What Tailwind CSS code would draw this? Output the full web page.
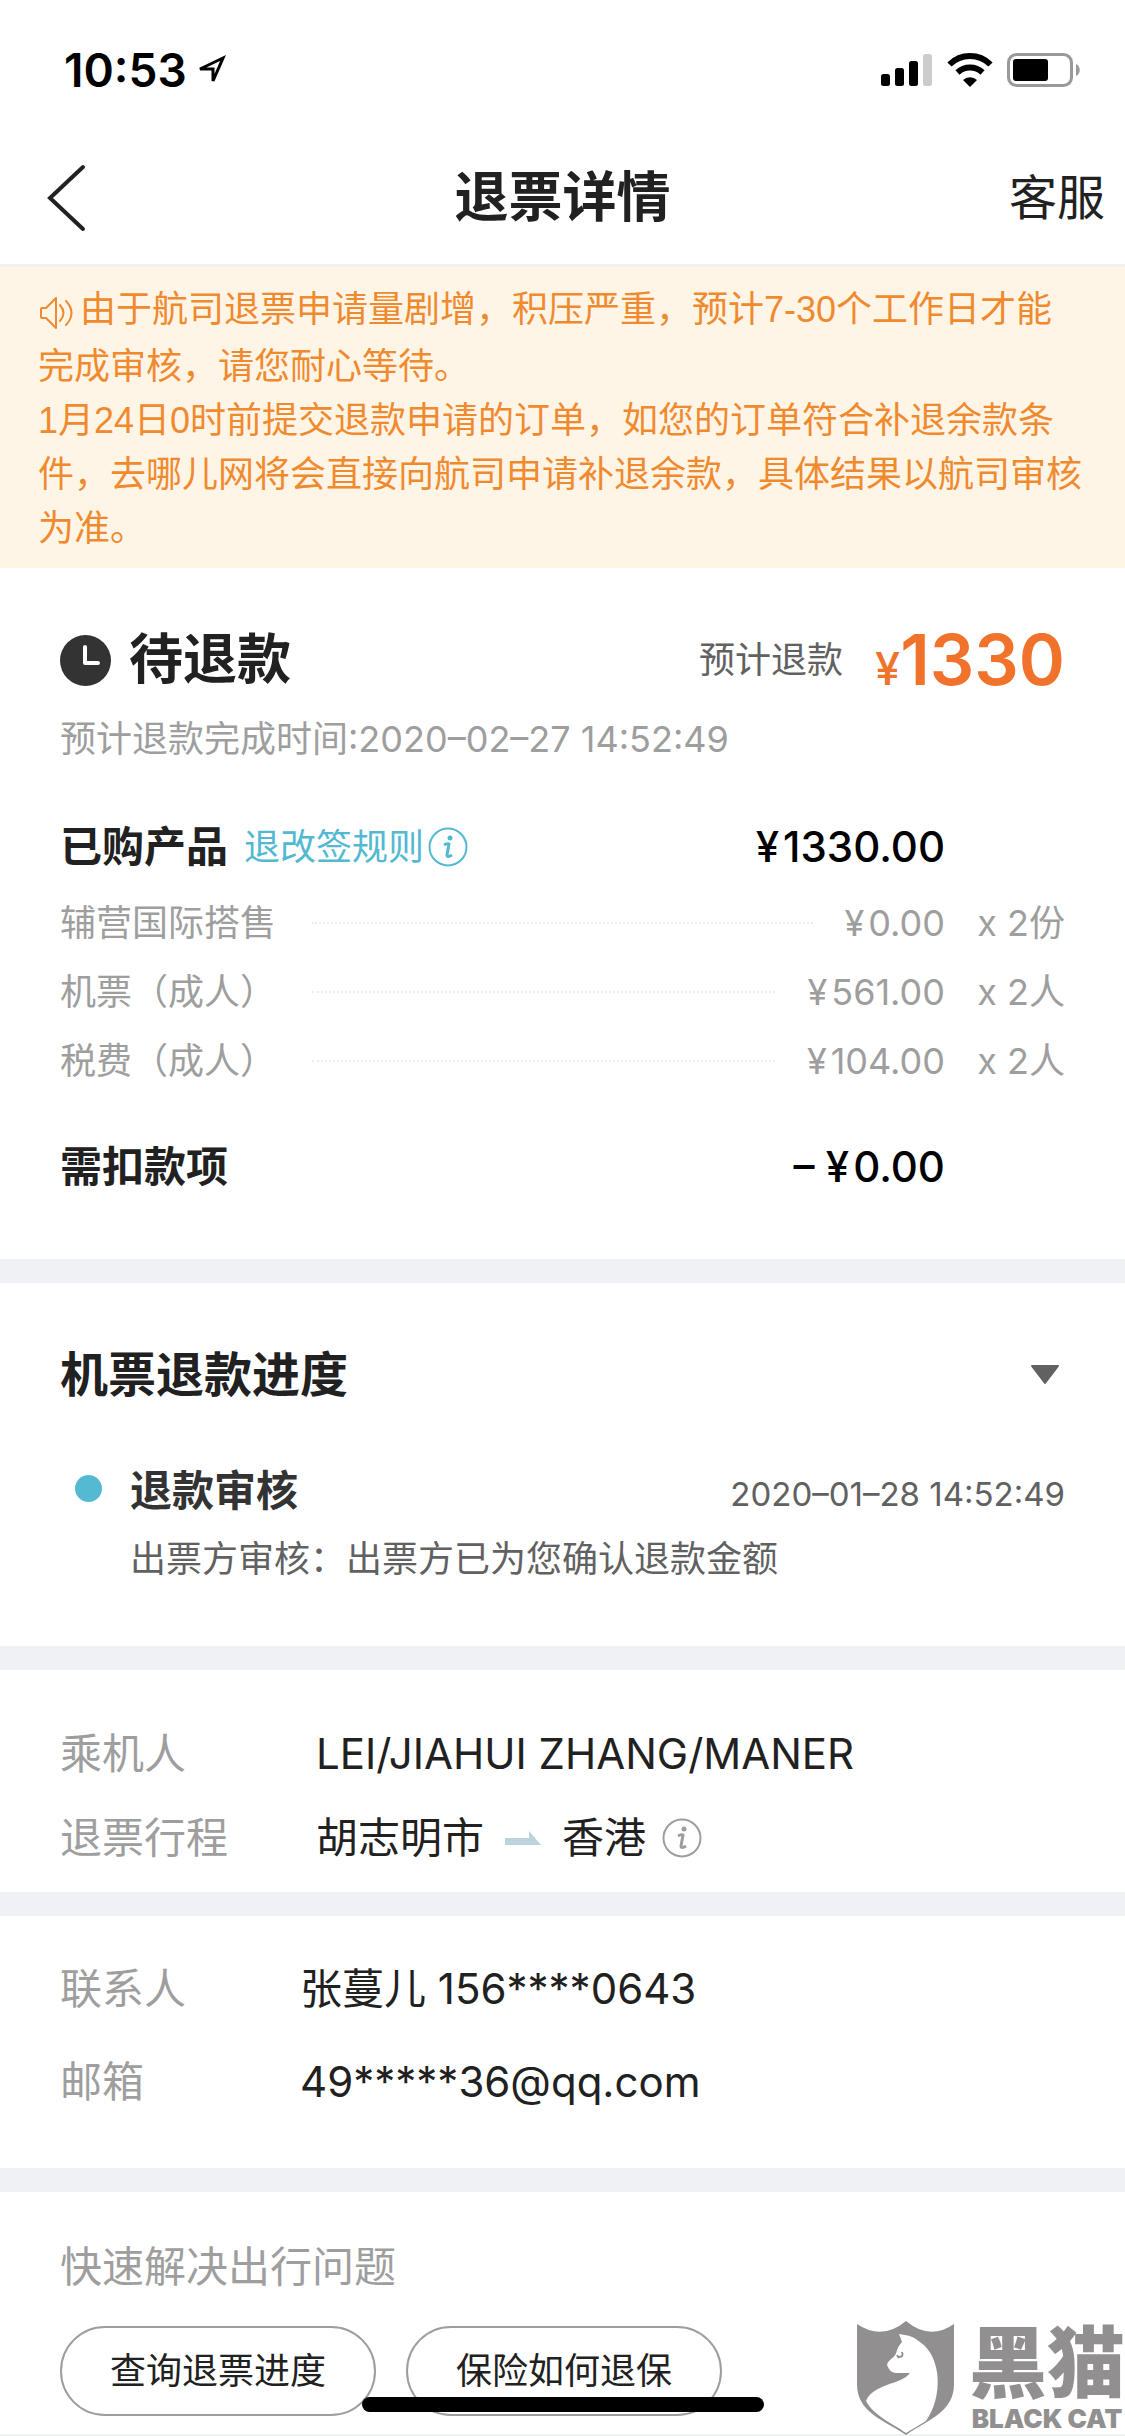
<!DOCTYPE html>
<html lang="zh-CN">
<head>
  <meta charset="UTF-8">
  <meta name="viewport" content="width=device-width, initial-scale=1.0">
  <title>退票详情</title>
  <script src="https://cdn.jsdelivr.net/npm/@tailwindcss/browser@4"></script>
</head>
<body class="relative min-h-screen overflow-x-hidden bg-[#eff1f4] font-['Inter','Noto_Sans_CJK_SC',sans-serif] text-[#212121]">

  <!-- status bar -->
  <div class="flex h-[132px] items-center justify-between bg-white pt-2 pr-11 pl-16 text-black">
    <div class="flex items-center gap-2">
      <span class="text-[46px] leading-none font-semibold">10:53</span>
      <svg class="h-8 w-8" viewBox="0 0 32 32"><path d="M28 4 5 15h13v12z" fill="none" stroke="#000" stroke-width="3"/></svg>
    </div>
    <div class="flex items-center gap-[14px]">
      <svg class="h-[34px] w-[52px]" viewBox="0 0 52 34">
        <rect x="0" y="21" width="9" height="12" rx="2.5"/><rect x="14" y="15" width="9" height="18" rx="2.5"/><rect x="28" y="8" width="9" height="25" rx="2.5"/><rect x="42" y="1" width="9" height="32" rx="2.5" fill="#ccc"/>
      </svg>
      <svg class="h-[34px] w-[46px]" viewBox="0 0 46 34">
        <path d="M2.500 11.500a29 29 0 0 1 41 0M10.500 19.500a18 18 0 0 1 25 0" fill="none" stroke="#000" stroke-width="6"/><path d="M16 27a10 10 0 0 1 14 0l-7 7z"/>
      </svg>
      <svg class="h-[34px] w-[74px]" viewBox="0 0 74 34">
        <rect x="1.500" y="1.500" width="63" height="31" rx="8" fill="none" stroke="#999" stroke-width="3"/><rect x="6" y="6" width="35" height="22" rx="3"/><path d="M69 11c5 2 5 10 0 12z" fill="#999"/>
      </svg>
    </div>
  </div>

  <!-- title bar -->
  <header class="grid h-[135px] grid-cols-3 items-center border-b-3 border-[#f0f1f2] bg-white px-5">
    <button class="ml-[26px] justify-self-start" aria-label="返回">
      <svg class="h-[68px] w-10" viewBox="0 0 40 68"><path d="M37 3 4 34l33 31" fill="none" stroke="#212121" stroke-width="4" stroke-linecap="round"/></svg>
    </button>
    <h1 class="text-center text-[54px] leading-none font-bold">退票详情</h1>
    <button class="justify-self-end text-[48px] leading-none">客服</button>
  </header>

  <!-- notice -->
  <div class="bg-[#fff5e7] pt-4 pr-10 pb-3 pl-[38px] font-['Liberation_Sans','Noto_Sans_CJK_SC',sans-serif] text-[36px] leading-[54px] text-[#f08a2f]">
    <p><svg class="inline-block h-[54px] w-[42px] align-[-18px]" viewBox="0 0 42 54"><path d="M3 23q0-1 1-1h4l10-10v30L8 32H4q-1 0-1-1zM22 19q7 8 0 16M28 15q11 12 0 24" fill="none" stroke="#f08a2f" stroke-width="2" stroke-linejoin="round" stroke-linecap="round"/></svg>由于航司退票申请量剧增，积压严重，预计7-30个工作日才能完成审核，请您耐心等待。</p>
    <p>1月24日0时前提交退款申请的订单，如您的订单符合补退余款条件，去哪儿网将会直接向航司申请补退余款，具体结果以航司审核为准。</p>
  </div>

  <main class="flex flex-col gap-6">
    <!-- refund amount -->
    <section class="bg-white px-[60px] py-14">
      <div class="flex h-[72px] items-center">
        <svg class="h-[51px] w-[51px]" viewBox="0 0 51 51"><circle cx="25.500" cy="25.500" r="25.500" fill="#333"/><path d="M25 12v16h13" fill="none" stroke="#fff" stroke-width="4" stroke-linecap="round" stroke-linejoin="round"/></svg>
        <h2 class="ml-[18px] text-[54px] leading-none font-bold">待退款</h2>
        <span class="mr-8 ml-auto text-[36px] leading-none text-[#616161]">预计退款</span>
        <span class="text-[70px] leading-none font-semibold text-[#f0722b]"><small class="text-[45px] font-medium">¥</small>1330</span>
      </div>
      <p class="mt-4 text-[36px] leading-[54px] text-[#9e9e9e]">预计退款完成时间:2020–02–27 14:52:49</p>

      <div class="mt-12 flex h-[66px] items-center pr-[120px]">
        <h3 class="mr-4 text-[42px] leading-none font-bold">已购产品</h3>
        <a href="#" class="flex items-center gap-1 text-[36px] leading-none text-[#52b9d1]">退改签规则
          <svg class="h-10 w-10" viewBox="0 0 40 40"><circle cx="20" cy="20" r="18.500" fill="none" stroke="#52b9d1" stroke-width="2"/><circle cx="22" cy="11" r="2.500" fill="#52b9d1"/><path d="M16 18q4-2 5-1l-2 11q0 3 5 0" fill="none" stroke="#52b9d1" stroke-width="3"/></svg>
        </a>
        <span class="ml-auto text-[42px] leading-none font-medium text-black"><span class="mr-1">¥</span>1330.00</span>
      </div>

      <table class="mt-2 w-full text-[36px] text-[#9e9e9e]">
        <tr class="h-[69px]">
          <td class="w-[252px] p-0">辅营国际搭售</td>
          <td class="p-0"><div class="flex items-center gap-8"><i class="flex-1 border-t-2 border-dotted border-[#eee]"></i><span><span class="mr-1">¥</span>0.00</span></div></td>
          <td class="w-[120px] p-0 text-right">x 2份</td>
        </tr>
        <tr class="h-[69px]">
          <td class="p-0">机票（成人）</td>
          <td class="p-0"><div class="flex items-center gap-8"><i class="flex-1 border-t-2 border-dotted border-[#eee]"></i><span><span class="mr-1">¥</span>561.00</span></div></td>
          <td class="p-0 text-right">x 2人</td>
        </tr>
        <tr class="h-[69px]">
          <td class="p-0">税费（成人）</td>
          <td class="p-0"><div class="flex items-center gap-8"><i class="flex-1 border-t-2 border-dotted border-[#eee]"></i><span><span class="mr-1">¥</span>104.00</span></div></td>
          <td class="p-0 text-right">x 2人</td>
        </tr>
      </table>

      <div class="mt-9 flex h-[72px] items-center justify-between pr-[120px] text-[42px] leading-none">
        <h3 class="font-bold">需扣款项</h3>
        <span class="font-medium text-black">– <span class="mr-1">¥</span>0.00</span>
      </div>
    </section>

    <!-- progress -->
    <section class="bg-white px-[60px] pt-14 pb-15">
      <div class="flex h-[72px] items-center justify-between">
        <h2 class="text-[48px] leading-none font-bold">机票退款进度</h2>
        <button class="mr-[5px]" aria-label="收起">
          <svg class="h-5 w-[30px]" viewBox="0 0 30 20"><path d="M2 1h26L15 18z" fill="#616161" stroke="#616161" stroke-width="2" stroke-linejoin="round"/></svg>
        </button>
      </div>
      <div class="mt-[47px] flex items-baseline">
        <i class="mr-7 mb-1.5 ml-[15px] h-[27px] w-[27px] self-center rounded-full bg-[#56b9d2]"></i>
        <h3 class="text-[42px] leading-[66px] font-bold text-[#333]">退款审核</h3>
        <time class="ml-auto text-[33px] leading-none text-[#616161]">2020–01–28 14:52:49</time>
      </div>
      <p class="mt-2 pl-[70px] text-[36px] leading-[54px] text-[#616161]">出票方审核：出票方已为您确认退款金额</p>
    </section>

    <!-- passengers -->
    <section class="bg-white px-[60px] pt-[42px] pb-3 text-[42px] leading-[84px]">
      <dl class="grid grid-cols-[256px_1fr]">
        <dt class="text-[#9e9e9e]">乘机人</dt>
        <dd>LEI/JIAHUI ZHANG/MANER</dd>
        <dt class="text-[#9e9e9e]">退票行程</dt>
        <dd class="flex items-center">胡志明市
          <svg class="mx-[21px] h-[14px] w-9" viewBox="0 0 36 14"><path d="M0 7h24V0l12 14H0z" fill="#bcd2dc"/></svg>香港
          <svg class="ml-4 h-10 w-10" viewBox="0 0 40 40"><circle cx="20" cy="20" r="18.500" fill="none" stroke="#9e9e9e" stroke-width="2"/><circle cx="22" cy="11" r="2.500" fill="#9e9e9e"/><path d="M16 18q4-2 5-1l-2 11q0 3 5 0" fill="none" stroke="#9e9e9e" stroke-width="3"/></svg>
        </dd>
      </dl>
    </section>

    <!-- contact -->
    <section class="bg-white px-[60px] pt-[26px] pb-10 text-[42px] leading-[93px]">
      <dl class="grid grid-cols-[240px_1fr]">
        <dt class="text-[#9e9e9e]">联系人</dt>
        <dd>张蔓儿 156****0643</dd>
        <dt class="text-[#9e9e9e]">邮箱</dt>
        <dd>49*****36@qq.com</dd>
      </dl>
    </section>

    <!-- quick help -->
    <section class="bg-white px-[60px] pt-[42px] pb-[18px]">
      <h2 class="text-[42px] leading-[66px] text-[#9e9e9e]">快速解决出行问题</h2>
      <div class="mt-[26px] flex gap-[30px]">
        <button class="h-[90px] rounded-full border-2 border-[#9e9e9e] px-12 text-[36px] leading-none">查询退票进度</button>
        <button class="h-[90px] rounded-full border-2 border-[#9e9e9e] px-12 text-[36px] leading-none">保险如何退保</button>
      </div>
    </section>
  </main>

  <!-- home indicator -->
  <div class="absolute bottom-6 left-1/2 h-[15px] w-[402px] -translate-x-1/2 rounded-full bg-black"></div>

  <!-- watermark -->
  <div class="absolute right-0 bottom-0 flex items-start gap-[14px] text-[#918f90]">
    <svg class="h-[115px] w-[98px]" viewBox="0 0 98 115">
      <path d="M0 3q25 17 49-3 24 20 48 3v60c0 28-25 35-48 51C25 98 0 91 0 63z" fill="#918f90"/>
      <path d="M42 13l3 8q-3 3-5 8c-1 8-9 9-10 15q3 8 9 8h14c-9 12-36 10-44 28 8 15 26 22 40 32l20-12c17-24 16-64-6-79q-7-6-15-7z" fill="#fff"/>
      <path d="M40 34l2 3M45 31q2 5-3 5" fill="none" stroke="#918f90" stroke-width="2"/>
    </svg>
    <div class="flex flex-col items-center">
      <span class="text-[78px] leading-[86px] font-black">黑猫</span>
      <span class="text-[26px] leading-6 font-black">BLACK CAT</span>
    </div>
  </div>
</body>
</html>
